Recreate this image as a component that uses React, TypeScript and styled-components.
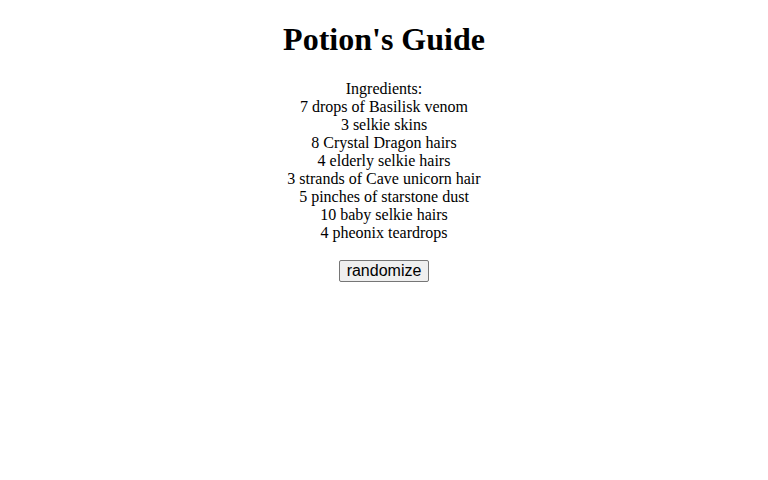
import React from "react";
import styled, { createGlobalStyle } from "styled-components";

const GlobalStyle = createGlobalStyle`
  body {
    margin: 0;
    font-family: "Liberation Serif", "Times New Roman", serif;
    color: #000;
    background: #fff;
  }
`;

const Page = styled.main`
  display: flex;
  flex-direction: column;
  align-items: center;
  padding: 0 8px 8px;
  text-align: center;
`;

const Title = styled.h1`
  font-size: 32px;
  font-weight: bold;
  margin: 21.44px 0;
`;

const IngredientList = styled.div`
  display: flex;
  flex-direction: column;
  font-size: 16px;
`;

const Line = styled.div`
  line-height: 18px;
`;

const RandomButton = styled.button`
  margin-top: 18px;
  font-family: "Liberation Sans", Arial, sans-serif;
  font-size: 16px;
  padding: 1px 7px;
  color: #000;
  background: #efefef;
  border: 1px solid #767676;
  border-radius: 2px;
  cursor: pointer;
  &:hover {
    background: #e5e5e5;
  }
`;

const ingredients = [
  "7 drops of Basilisk venom",
  "3 selkie skins",
  "8 Crystal Dragon hairs",
  "4 elderly selkie hairs",
  "3 strands of Cave unicorn hair",
  "5 pinches of starstone dust",
  "10 baby selkie hairs",
  "4 pheonix teardrops",
];

export default function App() {
  return (
    <>
      <GlobalStyle />
      <Page>
        <Title>Potion's Guide</Title>
        <IngredientList>
          <Line>Ingredients:</Line>
          {ingredients.map((item) => (
            <Line key={item}>{item}</Line>
          ))}
        </IngredientList>
        <RandomButton type="button">randomize</RandomButton>
      </Page>
    </>
  );
}
